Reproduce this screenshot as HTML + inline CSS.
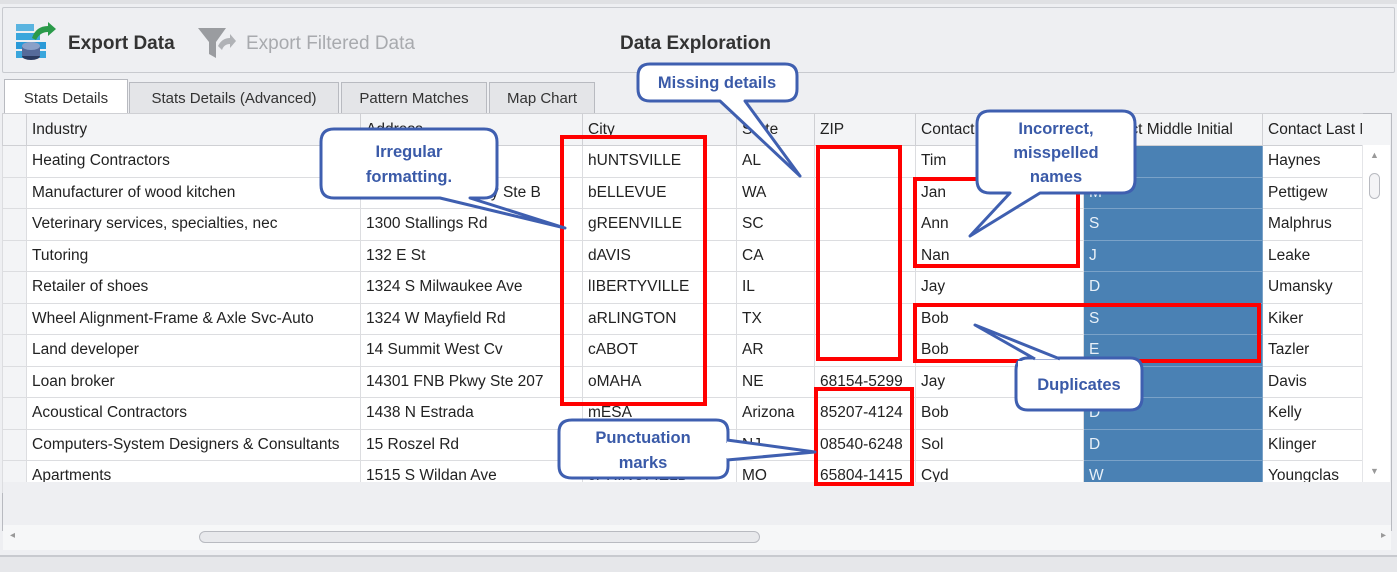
<!DOCTYPE html>
<html><head><meta charset="utf-8"><style>
*{margin:0;padding:0;box-sizing:border-box}
body{width:1397px;height:572px;background:#eeeff2;font-family:"Liberation Sans",sans-serif;position:relative;overflow:hidden;color:#222}
.abs{position:absolute}
.tb{left:2px;top:7px;width:1393px;height:66px;border:1px solid #c8cacf;background:#eeeff2;border-radius:2px}
.tab{position:absolute;top:82px;height:31px;border:1px solid #b8bac0;border-bottom:none;background:#e4e5e8;font-size:15px;line-height:31px;text-align:center;color:#333}
table{position:absolute;left:2px;top:113px;width:1360px;border-collapse:collapse;table-layout:fixed;background:#fff;font-size:15.5px}
td{height:31.5px;border:1px solid #dcdde0;padding-left:5px;white-space:nowrap;overflow:hidden;color:#222}
tr.h td{height:32px;background:#f3f4f6;border-color:#cfd0d4}
td.b{background:#4a81b4;color:#e8f0f8;border-color:#7aa2c8}
td.rh{background:#f3f4f6}
</style></head><body>
<div class="abs" style="left:0;top:0;width:1397px;height:4px;background:#e0e1e4"></div>
<div class="abs tb"></div>
<svg class="abs" style="left:14px;top:20px" width="48" height="48" viewBox="0 0 48 48">
<rect x="2" y="4" width="18" height="7" fill="#5ab4e0"/><rect x="2" y="13" width="24" height="7" fill="#3aa6dc"/><rect x="2" y="22" width="30" height="7" fill="#2a9ad8"/><rect x="2" y="31" width="30" height="7" fill="#3aa6dc"/>
<ellipse cx="17" cy="36" rx="9" ry="4" fill="#2a3a60"/><rect x="8" y="26" width="18" height="10" fill="#556a9a"/><ellipse cx="17" cy="26" rx="9" ry="4" fill="#8aa0c8"/>
<path d="M18 18 Q22 6 34 6 L34 2 L42 9 L34 16 L34 12 Q26 12 22 20 Z" fill="#2a9a4a"/></svg>
<div class="abs" style="left:68px;top:33px;font-size:19px;font-weight:bold;color:#333">Export Data</div>
<svg class="abs" style="left:196px;top:24px" width="40" height="40" viewBox="0 0 40 40"><path d="M2 4 H30 L20 18 V34 L13 30 V18 Z" fill="#9a9ca0"/><path d="M22 22 Q26 14 34 14 V10 L40 17 L34 24 V20 Q28 20 26 26Z" fill="#b0b2b6"/></svg>
<div class="abs" style="left:246px;top:33px;font-size:19px;color:#a8aaae">Export Filtered Data</div>
<div class="abs" style="left:620px;top:33px;font-size:19px;font-weight:bold;color:#333">Data Exploration</div>
<div class="tab" style="left:4px;width:124px;top:79px;height:35px;background:#fff;line-height:37px">Stats Details</div>
<div class="tab" style="left:129px;width:210px">Stats Details (Advanced)</div>
<div class="tab" style="left:341px;width:146px">Pattern Matches</div>
<div class="tab" style="left:489px;width:106px">Map Chart</div>
<div class="abs" style="left:2px;top:113px;width:1390px;height:418px;border:1px solid #b8bac0;background:#eeeff2"></div>
<table>
<colgroup><col style="width:24px"><col style="width:334px"><col style="width:222px"><col style="width:154px"><col style="width:78px"><col style="width:101px"><col style="width:168px"><col style="width:179px"><col style="width:100px"></colgroup>
<tr class="h"><td></td><td>Industry</td><td>Address</td><td>City</td><td>State</td><td>ZIP</td><td>Contact First Name</td><td>Contact Middle Initial</td><td>Contact Last Name</td></tr>
<tr><td class="rh"></td><td>Heating Contractors</td><td>1200 Main St</td><td>hUNTSVILLE</td><td>AL</td><td></td><td>Tim</td><td class="b">R</td><td>Haynes</td></tr>
<tr><td class="rh"></td><td>Manufacturer of wood kitchen</td><td>&nbsp;&nbsp;&nbsp;&nbsp;&nbsp;&nbsp;&nbsp;&nbsp;&nbsp;&nbsp;&nbsp;&nbsp;&nbsp;&nbsp;&nbsp;&nbsp;&nbsp;&nbsp;&nbsp;&nbsp;&nbsp;&nbsp;&nbsp;&nbsp;&nbsp;&nbsp;&nbsp;ay Ste B</td><td>bELLEVUE</td><td>WA</td><td></td><td>Jan</td><td class="b">M</td><td>Pettigew</td></tr>
<tr><td class="rh"></td><td>Veterinary services, specialties, nec</td><td>1300 Stallings Rd</td><td>gREENVILLE</td><td>SC</td><td></td><td>Ann</td><td class="b">S</td><td>Malphrus</td></tr>
<tr><td class="rh"></td><td>Tutoring</td><td>132 E St</td><td>dAVIS</td><td>CA</td><td></td><td>Nan</td><td class="b">J</td><td>Leake</td></tr>
<tr><td class="rh"></td><td>Retailer of shoes</td><td>1324 S Milwaukee Ave</td><td>lIBERTYVILLE</td><td>IL</td><td></td><td>Jay</td><td class="b">D</td><td>Umansky</td></tr>
<tr><td class="rh"></td><td>Wheel Alignment-Frame &amp; Axle Svc-Auto</td><td>1324 W Mayfield Rd</td><td>aRLINGTON</td><td>TX</td><td></td><td>Bob</td><td class="b">S</td><td>Kiker</td></tr>
<tr><td class="rh"></td><td>Land developer</td><td>14 Summit West Cv</td><td>cABOT</td><td>AR</td><td></td><td>Bob</td><td class="b">E</td><td>Tazler</td></tr>
<tr><td class="rh"></td><td>Loan broker</td><td>14301 FNB Pkwy Ste 207</td><td>oMAHA</td><td>NE</td><td>68154-5299</td><td>Jay</td><td class="b">A</td><td>Davis</td></tr>
<tr><td class="rh"></td><td>Acoustical Contractors</td><td>1438 N Estrada</td><td>mESA</td><td>Arizona</td><td>85207-4124</td><td>Bob</td><td class="b">D</td><td>Kelly</td></tr>
<tr><td class="rh"></td><td>Computers-System Designers &amp; Consultants</td><td>15 Roszel Rd</td><td>pRINCETON</td><td>NJ</td><td>08540-6248</td><td>Sol</td><td class="b">D</td><td>Klinger</td></tr>
<tr><td class="rh"></td><td>Apartments</td><td>1515 S Wildan Ave</td><td>sPRINGFIELD</td><td>MO</td><td>65804-1415</td><td>Cyd</td><td class="b">W</td><td>Youngclas</td></tr>
</table>
<div class="abs" style="left:3px;top:482px;width:1388px;height:48px;background:#eeeff2"></div>
<div class="abs" style="left:1362px;top:145px;width:28px;height:337px;background:#fff;border-left:1px solid #e4e5e8"></div>
<div class="abs" style="left:1362px;top:114px;width:28px;height:31px;background:#f3f4f6"></div>
<div class="abs" style="left:1369px;top:173px;width:11px;height:26px;border:1px solid #b8bac0;border-radius:6px;background:#f4f4f6"></div>
<div class="abs" style="left:1370px;top:150px;font-size:9px;color:#999">▲</div>
<div class="abs" style="left:1370px;top:466px;font-size:9px;color:#999">▼</div>
<div class="abs" style="left:3px;top:525px;width:1388px;height:25px;background:#f6f7f8"></div>
<div class="abs" style="left:199px;top:531px;width:561px;height:12px;border:1px solid #b8bac0;border-radius:6px;background:#e8e9ec"></div>
<div class="abs" style="left:10px;top:530px;font-size:10px;color:#999">◂</div>
<div class="abs" style="left:1381px;top:530px;font-size:10px;color:#999">▸</div>
<div class="abs" style="left:0;top:555px;width:1397px;height:17px;background:#e6e7ea;border-top:2px solid #c8cacf"></div>
<svg class="abs" style="left:0;top:0" width="1397" height="572">
<g fill="none" stroke="#f00" stroke-width="4">
<rect x="562" y="137" width="143" height="267"/>
<rect x="818" y="147" width="82" height="212"/>
<rect x="915" y="179" width="163" height="87"/>
<rect x="915" y="305" width="344" height="56"/>
<rect x="816" y="389" width="96" height="95"/>
</g>
<g fill="#fff" stroke="#3f5fb0" stroke-width="3" stroke-linejoin="round">
<path d="M650 64 H785 Q797 64 797 76 V89 Q797 101 785 101 H745 L800 176 L720 101 H650 Q638 101 638 89 V76 Q638 64 650 64Z"/>
<path d="M334 129 H484 Q497 129 497 142 V185 Q497 198 484 198 H470 L565 228 L440 198 H334 Q321 198 321 185 V142 Q321 129 334 129Z"/>
<path d="M990 111 H1122 Q1135 111 1135 124 V180 Q1135 193 1122 193 H1040 L970 236 L1010 193 H990 Q977 193 977 180 V124 Q977 111 990 111Z"/>
<path d="M1028 358 H1130 Q1142 358 1142 370 V398 Q1142 410 1130 410 H1028 Q1016 410 1016 398 V370 Q1016 358 1028 358Z"/>
<path d="M1035 359 L975 325 L1060 359"/>
<path d="M572 420 H716 Q728 420 728 432 V466 Q728 478 716 478 H572 Q559 478 559 466 V432 Q559 420 572 420Z"/>
<path d="M727 440 L815 452 L727 460"/>
</g>
<g fill="#fff"><rect x="1018" y="361" width="30" height="6"/><rect x="724" y="443" width="6" height="15"/></g>
<g fill="#3a5aa8" font-family="Liberation Sans,sans-serif" font-size="16.5" font-weight="bold" text-anchor="middle">
<text x="717" y="88">Missing details</text>
<text x="409" y="157">Irregular</text><text x="409" y="182">formatting.</text>
<text x="1056" y="134">Incorrect,</text><text x="1056" y="158">misspelled</text><text x="1056" y="182">names</text>
<text x="1079" y="390">Duplicates</text>
<text x="643" y="443">Punctuation</text><text x="643" y="468">marks</text>
</g>
</svg>
</body></html>
